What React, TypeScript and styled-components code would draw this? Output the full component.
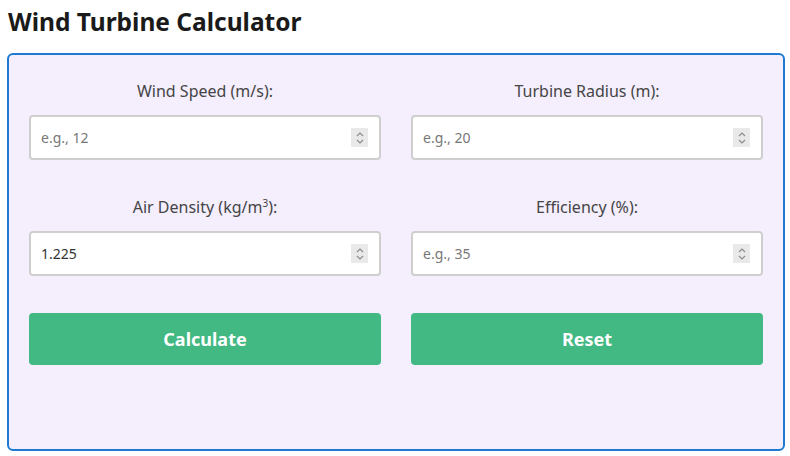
import React, { useState } from "react";
import styled, { createGlobalStyle } from "styled-components";

const GlobalStyle = createGlobalStyle`
  body {
    margin: 8px 5px 8px 7px;
    background: #ffffff;
    font-family: "Noto Sans", "Open Sans", sans-serif;
    color: #222;
  }
  * { box-sizing: border-box; }
`;

interface FieldProps {
  label: React.ReactNode;
  placeholder: string;
  value: string;
  onChange: (v: string) => void;
}

const Field: React.FC<FieldProps> = ({ label, placeholder, value, onChange }) => (
  <FieldWrap>
    <Label>{label}</Label>
    <InputBox>
      <NumberInput
        type="number"
        placeholder={placeholder}
        value={value}
        onChange={(e) => onChange(e.target.value)}
      />
      <Spinner>
        <svg width="10" height="14" viewBox="0 0 10 14" fill="none">
          <path d="M2 5 L5 2 L8 5" stroke="#8a8a8a" strokeWidth="1.1" />
          <path d="M2 9 L5 12 L8 9" stroke="#8a8a8a" strokeWidth="1.1" />
        </svg>
      </Spinner>
    </InputBox>
  </FieldWrap>
);

export default function App() {
  const [speed, setSpeed] = useState("");
  const [radius, setRadius] = useState("");
  const [density, setDensity] = useState("1.225");
  const [efficiency, setEfficiency] = useState("");

  const reset = () => {
    setSpeed("");
    setRadius("");
    setDensity("1.225");
    setEfficiency("");
  };

  return (
    <>
      <GlobalStyle />
      <Title>Wind Turbine Calculator</Title>
      <Panel>
        <Grid>
          <Field label="Wind Speed (m/s):" placeholder="e.g., 12" value={speed} onChange={setSpeed} />
          <Field label="Turbine Radius (m):" placeholder="e.g., 20" value={radius} onChange={setRadius} />
          <Field
            label={<>Air Density (kg/m<sup>3</sup>):</>}
            placeholder="e.g., 1.225"
            value={density}
            onChange={setDensity}
          />
          <Field label="Efficiency (%):" placeholder="e.g., 35" value={efficiency} onChange={setEfficiency} />
          <Button>Calculate</Button>
          <Button onClick={reset}>Reset</Button>
        </Grid>
      </Panel>
    </>
  );
}

const Title = styled.h1`
  font-size: 24.5px;
  font-weight: 700;
  line-height: 28px;
  margin: 0 0 17px 1px;
  color: #1a1a1a;
`;

const Panel = styled.section`
  border: 2px solid #1f78d1;
  border-radius: 6px;
  background: #f4eefd;
  padding: 24px 20px 84px;
`;

const Grid = styled.div`
  display: grid;
  grid-template-columns: 1fr 1fr;
  column-gap: 30px;
  row-gap: 35px;
`;

const FieldWrap = styled.div`
  display: flex;
  flex-direction: column;
`;

const Label = styled.label`
  display: block;
  text-align: center;
  font-size: 16px;
  line-height: 24px;
  color: #454545;
  margin-bottom: 12px;

  sup {
    font-size: 10px;
    line-height: 0;
  }
`;

const InputBox = styled.div`
  position: relative;
`;

const NumberInput = styled.input`
  width: 100%;
  height: 45px;
  border: 2px solid #cfcfcf;
  border-radius: 4px;
  background: #fff;
  padding: 0 10px;
  font-family: "Noto Sans", "Open Sans", sans-serif;
  font-size: 14px;
  color: #333;
  outline: none;
  -moz-appearance: textfield;

  &::placeholder {
    color: #777;
  }
  &::-webkit-inner-spin-button,
  &::-webkit-outer-spin-button {
    -webkit-appearance: none;
    margin: 0;
  }
`;

const Spinner = styled.span`
  position: absolute;
  right: 13px;
  top: 13px;
  width: 17px;
  height: 19px;
  background: #e9e9e9;
  display: flex;
  align-items: center;
  justify-content: center;
  pointer-events: none;
`;

const Button = styled.button`
  height: 52px;
  margin-top: 2px;
  border: none;
  border-radius: 4px;
  background: #42b883;
  color: #fff;
  font-family: "Noto Sans", "Open Sans", sans-serif;
  font-size: 18px;
  font-weight: 700;
  cursor: pointer;
`;
